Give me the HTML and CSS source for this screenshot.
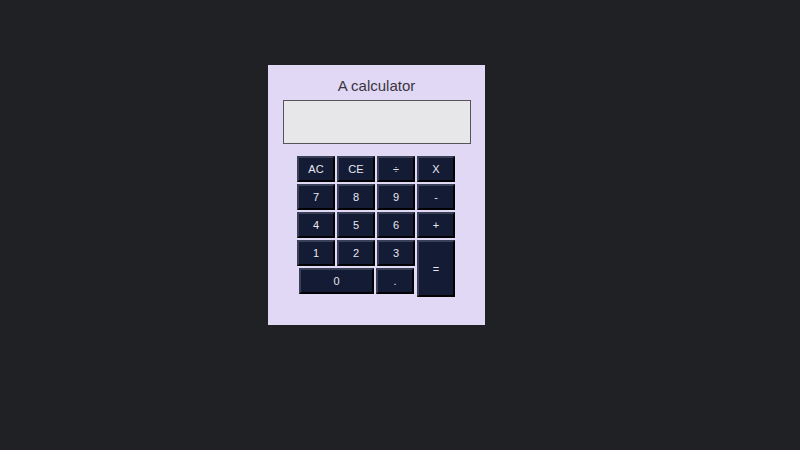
FILE: index.html
```html
<!DOCTYPE html>
<html lang="en">
<head>
    <meta charset="UTF-8">
    <meta name="viewport" content="width=device-width, initial-scale=1.0">
    <title>Calculator</title>
    <link rel="stylesheet" href="styles.css">
</head>
<body>
    <div class="calculator">
        <h1>A calculator</h1>
        <div id="display" class="display"></div>

        <div class="keys">
            <button>AC</button>
            <button>CE</button>
            <button>÷</button>
            <button>X</button>

            <button>7</button>
            <button>8</button>
            <button>9</button>
            <button>-</button>

            <button>4</button>
            <button>5</button>
            <button>6</button>
            <button>+</button>

            <button>1</button>
            <button>2</button>
            <button>3</button>
            <button class="equals">=</button>

            <button class="zero">0</button>
            <button class="dot">.</button>
        </div>
    </div>
</body>
</html>
```

FILE: styles.css
```css
body {
    margin: 0;
    padding: 65px 0 0 268px;
    background-color: #202124;
    font-family: "Liberation Sans", Arial, sans-serif;
}
.calculator {
    width: 217px;
    height: 260px;
    box-sizing: border-box;
    padding-top: 11px;
    background-color: #e1d8f5;
}
h1 {
    margin: 0;
    font-size: 15px;
    font-weight: normal;
    line-height: 19px;
    color: #3a3540;
    text-align: center;
}
.display {
    width: 188px;
    height: 44px;
    box-sizing: border-box;
    margin: 5px 0 0 15px;
    background-color: #e7e7e9;
    border: 1px solid #555;
}
.keys {
    display: grid;
    grid-template-columns: repeat(4, 38px);
    grid-auto-rows: 26px;
    gap: 2px;
    margin: 12px 0 0 29px;
}
.keys button {
    background-color: #141b35;
    color: #e8e8ee;
    border: 2px outset #3a4058;
    font-family: "Liberation Sans", Arial, sans-serif;
    font-size: 11px;
    padding: 0;
    cursor: pointer;
}
.keys button:hover {
    background-color: #1f2848;
}
.keys .equals {
    grid-column: 4;
    grid-row: 4 / span 2;
    margin-bottom: -3px;
}
.keys .zero {
    grid-column: 1 / span 2;
    margin: 0 1px 0 2px;
}
.keys .dot {
    margin: 0 1px 0 -1px;
}
```
